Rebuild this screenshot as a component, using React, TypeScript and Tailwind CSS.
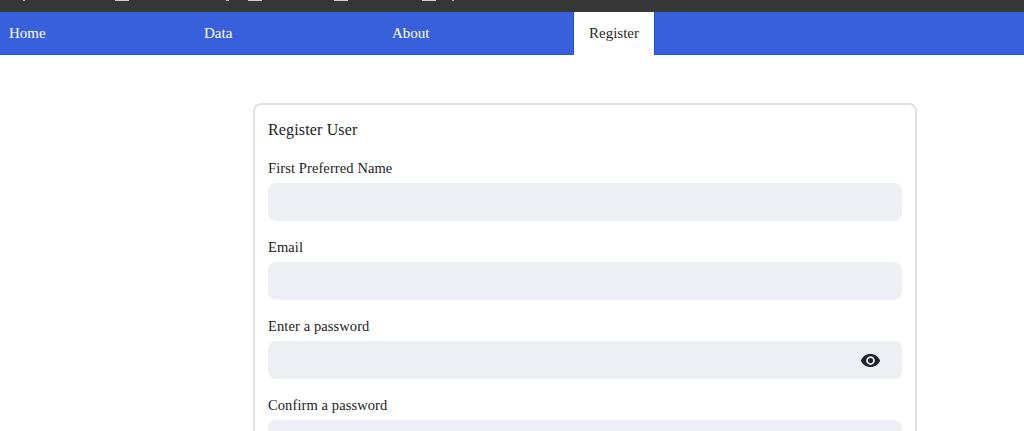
const navItems = [
  { label: 'Home', width: 'w-[195px]' },
  { label: 'Data', width: 'w-[188px]' },
  { label: 'About', width: 'w-[182px]' },
];

const fields = ['First Preferred Name', 'Email', 'Enter a password', 'Confirm a password'];

function EyeIcon() {
  return (
    <svg viewBox="0 0 24 24" className="w-[21px] h-[21px] text-[#1f2126]" fill="currentColor">
      <path d="M12 4.5C7 4.5 2.73 7.61 1 12c1.73 4.39 6 7.5 11 7.5s9.27-3.11 11-7.5c-1.73-4.39-6-7.5-11-7.5zM12 17c-2.76 0-5-2.24-5-5s2.24-5 5-5 5 2.24 5 5-2.24 5-5 5zm0-8c-1.66 0-3 1.34-3 3s1.34 3 3 3 3-1.34 3-3-1.34-3-3-3z" />
    </svg>
  );
}

export default function App() {
  return (
    <div className="w-[1024px] h-[431px] overflow-hidden bg-white font-['Liberation_Serif',serif]">
      {/* bottom edge of the browser bar, only the tips of its text are visible */}
      <div className="h-[12px] bg-[#363636] flex items-start">
        <span className="ml-[23px] w-[2px] h-px bg-[#b5b5b5]" />
        <span className="ml-[90px] w-[14px] h-px bg-[#cfcfcf]" />
        <span className="ml-[97px] w-[3px] h-px bg-[#b5b5b5]" />
        <span className="ml-[19px] w-[14px] h-px bg-[#cfcfcf]" />
        <span className="ml-[72px] w-[14px] h-px bg-[#cfcfcf]" />
        <span className="ml-[74px] w-[14px] h-px bg-[#cfcfcf]" />
        <span className="ml-[16px] w-[2px] h-px bg-[#b5b5b5]" />
      </div>
      <nav className="flex h-[43px] bg-[#3860dd] border-b border-[#1d4fe0] text-white text-[15px]">
        {navItems.map((item) => (
          <a key={item.label} className={`${item.width} pl-[9px] pt-[12px] leading-[18px]`}>
            {item.label}
          </a>
        ))}
        <a className="w-[82px] -mb-px ml-[8px] bg-white border-x border-[#1d4fe0] text-[#2a2a2a] text-center pt-[12px] leading-[18px]">
          Register
        </a>
      </nav>

      <main className="pt-[48px] pl-[253px]">
        <section className="w-[664px] border-2 border-[#dfe0e3] rounded-[8px] px-[13px] pt-[14px]">
          <h2 className="text-[16px] tracking-[0.15px] leading-[22px] text-[#1c1c22]">Register User</h2>
          <div className="mt-[16px] flex flex-col gap-[15px]">
            {fields.map((field, i) => (
              <div key={field}>
                <label className="block text-[14.5px] tracking-[0.1px] leading-[22px] mb-[4px] text-[#1c1c22]">{field}</label>
                <div className="h-[38px] rounded-[8px] bg-[#eeeff4] flex items-center justify-end pr-[21px]">
                  {i === 2 && <EyeIcon />}
                </div>
              </div>
            ))}
          </div>
        </section>
      </main>
    </div>
  );
}
